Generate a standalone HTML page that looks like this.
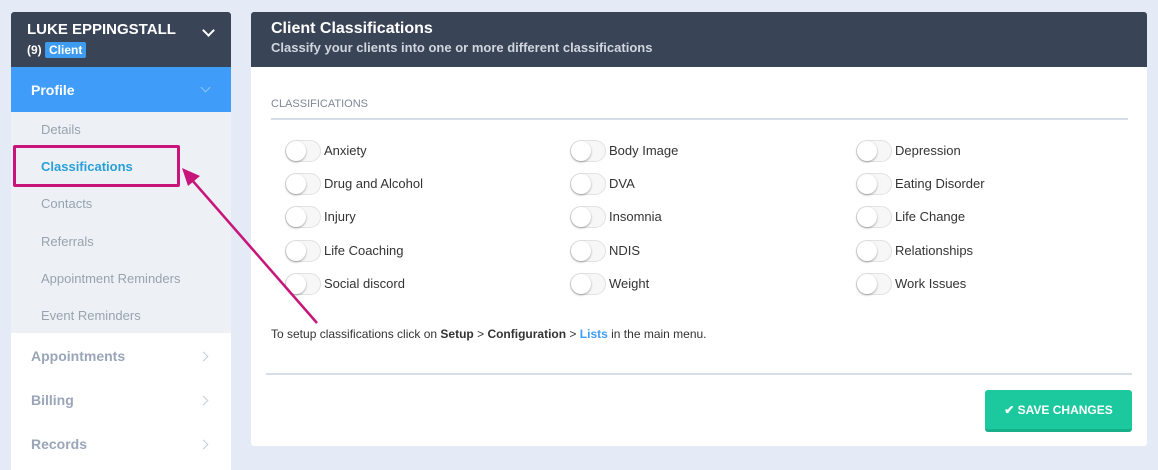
<!DOCTYPE html><html><head><style>
html,body{margin:0;width:1158px;height:470px;overflow:hidden}
body{background:#e4ebf7;font-family:"Liberation Sans",sans-serif;position:relative}
.a{position:absolute}
.side{left:11px;top:12px;width:220px;height:458px;background:#fff}
.sh{left:0;top:0;width:220px;height:55px;background:#3a4457;border-radius:3px 3px 0 0}
.sub{color:#99a3ad;font-size:13px;left:30px}
.big{color:#9aa6b8;font-size:14px;font-weight:bold;left:20px}
.chev{width:6px;height:6px;border-right:1.5px solid #c6ccd4;border-top:1.5px solid #c6ccd4;transform:rotate(45deg);left:189px}
.main{left:251px;top:12px;width:896px;height:434px;background:#fff;border-radius:3px}
.tg{width:34px;height:20px;border:1px solid #e2e2e2;border-radius:11px;background:#f7f7f7}
.tg:after{content:"";position:absolute;left:0;top:0;width:20px;height:20px;border-radius:50%;background:#fff;box-shadow:0 1px 2px rgba(0,0,0,.35)}
.lb{font-size:13px;color:#333}
</style></head><body>
<div class="a side">
<div class="a sh"></div>
<div class="a" style="left:16px;top:9px;color:#fff;font-size:15px;font-weight:bold">LUKE EPPINGSTALL</div>
<div class="a" style="left:193px;top:14px;width:7px;height:7px;border-right:2px solid #fff;border-bottom:2px solid #fff;transform:rotate(45deg)"></div>
<div class="a" style="left:16px;top:31px;color:#fff;font-size:12px;font-weight:bold">(9)</div>
<div class="a" style="left:34px;top:30px;background:#3d9cf0;color:#fff;font-size:12px;font-weight:bold;padding:1px 4px;border-radius:2px">Client</div>
<div class="a" style="left:0;top:55px;width:220px;height:45px;background:#3f9cf8"></div>
<div class="a" style="left:20px;top:70px;color:#fff;font-size:14px;font-weight:bold">Profile</div>
<div class="a" style="left:191px;top:72px;width:6px;height:6px;border-right:1.5px solid #8cc5fb;border-bottom:1.5px solid #8cc5fb;transform:rotate(45deg)"></div>
<div class="a" style="left:0;top:100px;width:220px;height:221px;background:#edf1f6"></div>
<div class="a sub" style="top:110px">Details</div>
<div class="a sub" style="top:147px;color:#2a9fd8;font-weight:bold">Classifications</div>
<div class="a sub" style="top:184px">Contacts</div>
<div class="a sub" style="top:222px">Referrals</div>
<div class="a sub" style="top:259px">Appointment Reminders</div>
<div class="a sub" style="top:296px">Event Reminders</div>
<div class="a big" style="top:336px">Appointments</div><div class="a chev" style="top:341px"></div>
<div class="a big" style="top:380px">Billing</div><div class="a chev" style="top:385px"></div>
<div class="a big" style="top:424px">Records</div><div class="a chev" style="top:429px"></div>
</div>
<div class="a main">
<div class="a" style="left:0;top:0;width:896px;height:55px;background:#3a4457;border-radius:3px 3px 0 0"></div>
<div class="a" style="left:20px;top:8px;color:#fff;font-size:16px;font-weight:bold">Client Classifications</div>
<div class="a" style="left:20px;top:28px;color:#d0d6de;font-size:13px;font-weight:bold">Classify your clients into one or more different classifications</div>
<div class="a" style="left:20px;top:86px;color:#7d8896;font-size:11px">CLASSIFICATIONS</div>
<div class="a" style="left:20px;top:106px;width:857px;height:2px;background:#d6deea"></div>
<div class="a" style="left:15px;top:361px;width:866px;height:2px;background:#d6deea"></div>
<div class="a" style="left:20px;top:315px;font-size:12px;color:#333">To setup classifications click on <b>Setup</b> &gt; <b>Configuration</b> &gt; <b style="color:#3f9cf8">Lists</b> in the main menu.</div>
<div class="a" style="left:734px;top:378px;width:147px;height:42px;background:#1cc99e;border-bottom:3px solid #17b08a;border-radius:3px;box-sizing:border-box;color:#fff;font-size:12px;font-weight:bold;text-align:center;line-height:40px">✔ SAVE CHANGES</div>
</div>
<div id="t"></div>
<script>
var L=[["Anxiety","Body Image","Depression"],["Drug and Alcohol","DVA","Eating Disorder"],["Injury","Insomnia","Life Change"],["Life Coaching","NDIS","Relationships"],["Social discord","Weight","Work Issues"]];
var Y=[140,173,206,240,273],X=[285,570,856],h="";
for(var r=0;r<5;r++)for(var c=0;c<3;c++){h+='<div class="a tg" style="left:'+X[c]+'px;top:'+Y[r]+'px"></div><div class="a lb" style="left:'+(X[c]+39)+'px;top:'+(Y[r]+3)+'px">'+L[r][c]+'</div>';}
document.getElementById("t").innerHTML=h;
</script>
<div class="a" style="left:13px;top:145px;width:161px;height:36px;border:3px solid #c8157a;border-radius:2px"></div>
<svg class="a" style="left:0;top:0" width="1158" height="470"><line x1="317" y1="323" x2="192" y2="180" stroke="#c8157a" stroke-width="2.5"/><polygon points="182,168 200,176 188,186" fill="#c8157a"/></svg>
</body></html>
